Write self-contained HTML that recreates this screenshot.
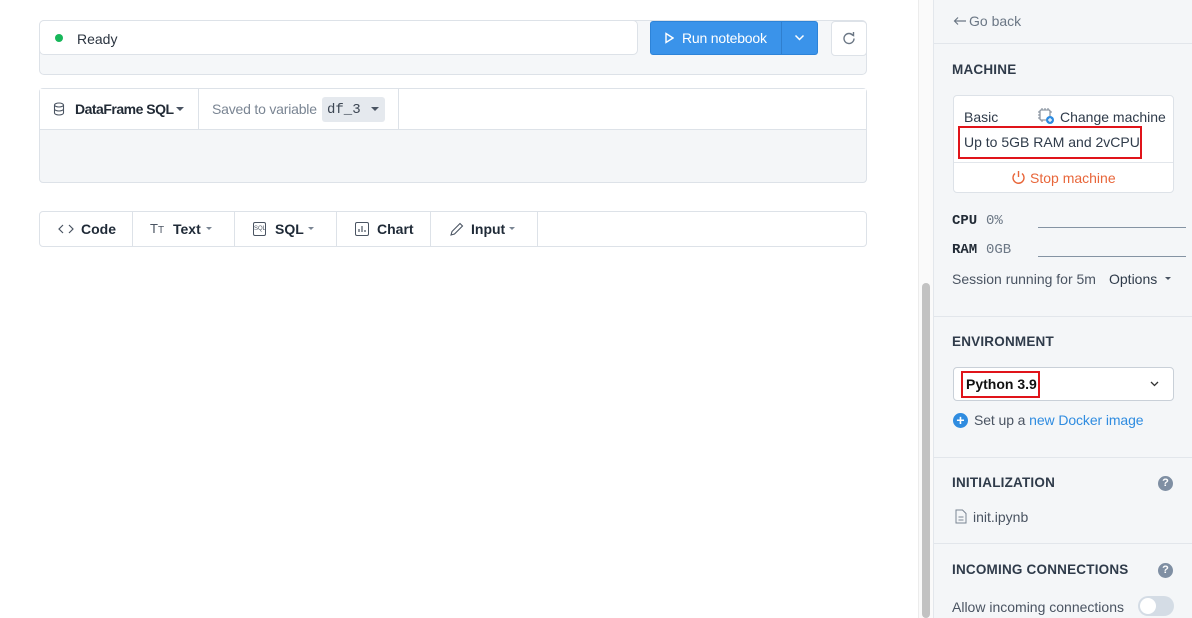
<!DOCTYPE html>
<html><head><style>
*{box-sizing:border-box;margin:0;padding:0}
body{width:1192px;height:618px;overflow:hidden;background:#fff;font-family:"Liberation Sans",sans-serif;position:relative;color:#1f2a37}
.abs{position:absolute}
.box{position:absolute;border:1px solid #dde2e8;border-radius:4px}
.t{position:absolute;font-size:14px;white-space:nowrap}
.side{position:absolute;left:933px;top:0;width:259px;height:618px;background:#f4f6f8;border-left:1px solid #e3e7ec}
.hr{position:absolute;left:0;width:259px;height:1px;background:#e2e6eb}
.h{position:absolute;left:18px;font-size:13.5px;font-weight:bold;color:#2f3b4a;letter-spacing:.2px}
.mono{font-family:"Liberation Mono",monospace}
.sep{position:absolute;top:0;width:1px;height:34px;background:#dde2e8}
</style></head><body>
<div class="box" style="left:39px;top:20px;width:828px;height:55px;background:#f5f7f9;border-radius:5px"></div>
<div class="box" style="left:39px;top:20px;width:599px;height:35px;background:#fff;border-radius:5px"></div>
<div class="abs" style="left:55px;top:34px;width:8px;height:8px;border-radius:50%;background:#17b75a"></div>
<div class="t" style="left:77px;top:31px;color:#2b3440">Ready</div>
<div class="abs" style="left:650px;top:21px;width:168px;height:34px;background:#3a93ea;border:1px solid #2d83d8;border-radius:3px"></div>
<div class="abs" style="left:781px;top:22px;width:1px;height:32px;background:#2f7fcf"></div>
<svg class="abs" style="left:664px;top:32px" width="10" height="12"><path d="M2 1.5 L9 6 L2 10.5Z" fill="none" stroke="#fff" stroke-width="1.4"/></svg>
<div class="t" style="left:682px;top:30px;color:#fff;letter-spacing:-.2px">Run notebook</div>
<svg class="abs" style="left:794px;top:34px" width="11" height="8"><path d="M1.5 1.5 L5.5 5.5 L9.5 1.5" fill="none" stroke="#fff" stroke-width="1.5"/></svg>
<div class="box" style="left:831px;top:21px;width:36px;height:35px;background:#fff"></div>
<svg class="abs" style="left:842px;top:31px" width="14" height="14"><path d="M11 4.5 A5 5 0 1 0 12 7.5" fill="none" stroke="#6b7785" stroke-width="1.4"/><path d="M8 2.5 L11.5 4.5 L11.5 1" fill="none" stroke="#6b7785" stroke-width="1.4"/></svg>
<div class="box" style="left:39px;top:88px;width:828px;height:95px;background:#f4f6f8"></div>
<div class="abs" style="left:40px;top:89px;width:826px;height:41px;background:#fff;border-bottom:1px solid #dde2e8"></div>
<svg class="abs" style="left:53px;top:102px" width="12" height="14"><ellipse cx="6" cy="3" rx="4.5" ry="2" fill="none" stroke="#4a5462" stroke-width="1.1"/><path d="M1.5 3v8c0 1.1 2 2 4.5 2s4.5-.9 4.5-2V3M1.5 7c0 1.1 2 2 4.5 2s4.5-.9 4.5-2" fill="none" stroke="#4a5462" stroke-width="1.1"/></svg>
<div class="t" style="left:75px;top:101px;font-weight:bold;color:#222b36;letter-spacing:-.5px">DataFrame SQL</div>
<div class="abs" style="left:176px;top:107px;border:4px solid transparent;border-top:4px solid #4a5462"></div>
<div class="abs" style="left:198px;top:89px;width:1px;height:41px;background:#dde2e8"></div>
<div class="t" style="left:212px;top:101px;color:#7a8593;letter-spacing:-.2px">Saved to variable</div>
<div class="abs" style="left:322px;top:97px;width:63px;height:25px;background:#e5e9ee;border-radius:3px"></div>
<div class="t mono" style="left:327px;top:102px;color:#3b4552">df_3</div>
<div class="abs" style="left:371px;top:107px;border:4px solid transparent;border-top:4px solid #4a5462"></div>
<div class="abs" style="left:398px;top:89px;width:1px;height:41px;background:#dde2e8"></div>
<div class="box" style="left:39px;top:211px;width:828px;height:36px;background:#fff">
<div class="sep" style="left:92px"></div><div class="sep" style="left:194px"></div><div class="sep" style="left:296px"></div><div class="sep" style="left:390px"></div><div class="sep" style="left:497px"></div>
</div>
<svg class="abs" style="left:58px;top:224px" width="16" height="10"><path d="M5 1 L1 5 L5 9 M11 1 L15 5 L11 9" fill="none" stroke="#4a5462" stroke-width="1.2"/></svg>
<div class="t" style="left:81px;top:221px;font-weight:bold">Code</div>
<div class="t" style="left:150px;top:221px;color:#4a5462;font-size:13px">T<span style="font-size:10px">T</span></div>
<div class="t" style="left:173px;top:221px;font-weight:bold">Text</div>
<div class="abs" style="left:206px;top:227px;border:3px solid transparent;border-top:3px solid #7a8593"></div>
<div class="abs" style="left:253px;top:222px;width:13px;height:14px;border:1px solid #4a5462;border-radius:2px;font-size:6px;line-height:12px;text-align:center;color:#4a5462;background:#fff">SQL</div>
<div class="t" style="left:275px;top:221px;font-weight:bold">SQL</div>
<div class="abs" style="left:308px;top:227px;border:3px solid transparent;border-top:3px solid #7a8593"></div>
<svg class="abs" style="left:355px;top:222px" width="14" height="14"><rect x=".5" y=".5" width="13" height="13" rx="1.5" fill="none" stroke="#4a5462"/><path d="M4 10V7M7 10V4M10 10V8" stroke="#4a5462" stroke-width="1.2"/></svg>
<div class="t" style="left:377px;top:221px;font-weight:bold">Chart</div>
<svg class="abs" style="left:449px;top:222px" width="15" height="15"><path d="M2 13 L3 9.5 L11 1.5 L13.5 4 L5.5 12 Z" fill="none" stroke="#4a5462" stroke-width="1.1"/></svg>
<div class="t" style="left:471px;top:221px;font-weight:bold">Input</div>
<div class="abs" style="left:509px;top:227px;border:3px solid transparent;border-top:3px solid #7a8593"></div>
<div class="abs" style="left:918px;top:0;width:15px;height:618px;background:#fafafa;border-left:1px solid #ececec"></div>
<div class="abs" style="left:922px;top:283px;width:8px;height:335px;background:#c2c2c2;border-radius:4px"></div>
<div class="side">
<svg class="abs" style="left:19px;top:16px" width="14" height="10"><path d="M13 5H1.5M5 1.5 L1.5 5 L5 8.5" fill="none" stroke="#6b7785" stroke-width="1.2"/></svg>
<div class="t" style="left:35px;top:13px;color:#6b7785">Go back</div>
<div class="hr" style="top:43px"></div>
<div class="h" style="top:62px">MACHINE</div>
<div class="abs" style="left:19px;top:95px;width:221px;height:98px;background:#fff;border:1px solid #dde2e8;border-radius:4px"></div>
<div class="abs" style="left:20px;top:162px;width:219px;height:1px;background:#e2e6eb"></div>
<div class="t" style="left:30px;top:109px;color:#2f3b4a">Basic</div>
<svg class="abs" style="left:104px;top:108px" width="17" height="17"><rect x="2" y="2" width="10" height="10" rx="1" fill="none" stroke="#7a8593" stroke-width="1.1"/><path d="M4 0v2M7 0v2M10 0v2M0 4h2M0 7h2M0 10h2M14 4h-2M4 14v-2" stroke="#7a8593"/><circle cx="12" cy="12" r="4" fill="#2f8ce0"/><path d="M12 10v4M10 12h4" stroke="#fff" stroke-width="1.2"/></svg>
<div class="t" style="left:126px;top:109px;color:#2f3b4a">Change machine</div>
<div class="abs" style="left:24px;top:126px;width:184px;height:33px;border:2px solid #e0141a"></div>
<div class="t" style="left:30px;top:134px;color:#2f3b4a">Up to 5GB RAM and 2vCPU</div>
<svg class="abs" style="left:77px;top:170px" width="15" height="15"><path d="M4 3.5 A5.5 5.5 0 1 0 11 3.5" fill="none" stroke="#e8663a" stroke-width="1.4"/><path d="M7.5 1v6" stroke="#e8663a" stroke-width="1.4"/></svg>
<div class="t" style="left:96px;top:170px;color:#e8663a;font-size:14px">Stop machine</div>
<div class="t mono" style="left:18px;top:213px;font-size:14px;font-weight:bold;color:#222b36">CPU</div>
<div class="t mono" style="left:52px;top:213px;font-size:14px;color:#6b7785">0%</div>
<div class="abs" style="left:104px;top:227px;width:148px;height:1px;background:#8493a3"></div>
<div class="t mono" style="left:18px;top:242px;font-size:14px;font-weight:bold;color:#222b36">RAM</div>
<div class="t mono" style="left:52px;top:242px;font-size:14px;color:#6b7785">0GB</div>
<div class="abs" style="left:104px;top:256px;width:148px;height:1px;background:#8493a3"></div>
<div class="t" style="left:18px;top:271px;color:#4a5462">Session running for 5m</div>
<div class="t" style="left:175px;top:271px;color:#2f3b4a">Options</div>
<div class="abs" style="left:231px;top:277px;border:3px solid transparent;border-top:3px solid #4a5462"></div>
<div class="hr" style="top:316px"></div>
<div class="h" style="top:334px">ENVIRONMENT</div>
<div class="abs" style="left:19px;top:367px;width:221px;height:34px;background:#fff;border:1px solid #c9d0d8;border-radius:4px"></div>
<div class="abs" style="left:27px;top:371px;width:79px;height:27px;border:2px solid #e0141a"></div>
<div class="t" style="left:32px;top:376px;font-weight:bold;color:#111">Python 3.9</div>
<svg class="abs" style="left:216px;top:381px" width="9" height="6"><path d="M1 1 L4.5 4.5 L8 1" fill="none" stroke="#333" stroke-width="1.3"/></svg>
<div class="abs" style="left:19px;top:413px;width:15px;height:15px;border-radius:50%;background:#2f8ce0;color:#fff;font-size:14px;line-height:15px;text-align:center;font-weight:bold">+</div>
<div class="t" style="left:40px;top:412px;color:#4a5462;letter-spacing:-.1px">Set up a <span style="color:#2f8ce0">new Docker image</span></div>
<div class="hr" style="top:457px"></div>
<div class="h" style="top:475px">INITIALIZATION</div>
<div class="abs" style="left:224px;top:476px;width:15px;height:15px;border-radius:50%;background:#7f8fa3;color:#fff;font-size:11px;line-height:15px;text-align:center;font-weight:bold">?</div>
<svg class="abs" style="left:21px;top:509px" width="12" height="15"><path d="M1 1h6.5L11 4.5V14H1Z" fill="none" stroke="#7a8593"/><path d="M3.5 8h5M3.5 11h5" stroke="#7a8593"/></svg>
<div class="t" style="left:39px;top:509px;color:#4a5462">init.ipynb</div>
<div class="hr" style="top:543px"></div>
<div class="h" style="top:562px">INCOMING CONNECTIONS</div>
<div class="abs" style="left:224px;top:563px;width:15px;height:15px;border-radius:50%;background:#7f8fa3;color:#fff;font-size:11px;line-height:15px;text-align:center;font-weight:bold">?</div>
<div class="t" style="left:18px;top:599px;color:#4a5462;font-size:14px">Allow incoming connections</div>
<div class="abs" style="left:204px;top:596px;width:36px;height:20px;border-radius:10px;background:#d4dce5"></div>
<div class="abs" style="left:206px;top:598px;width:16px;height:16px;border-radius:50%;background:#fff"></div>
</div>
</body></html>
